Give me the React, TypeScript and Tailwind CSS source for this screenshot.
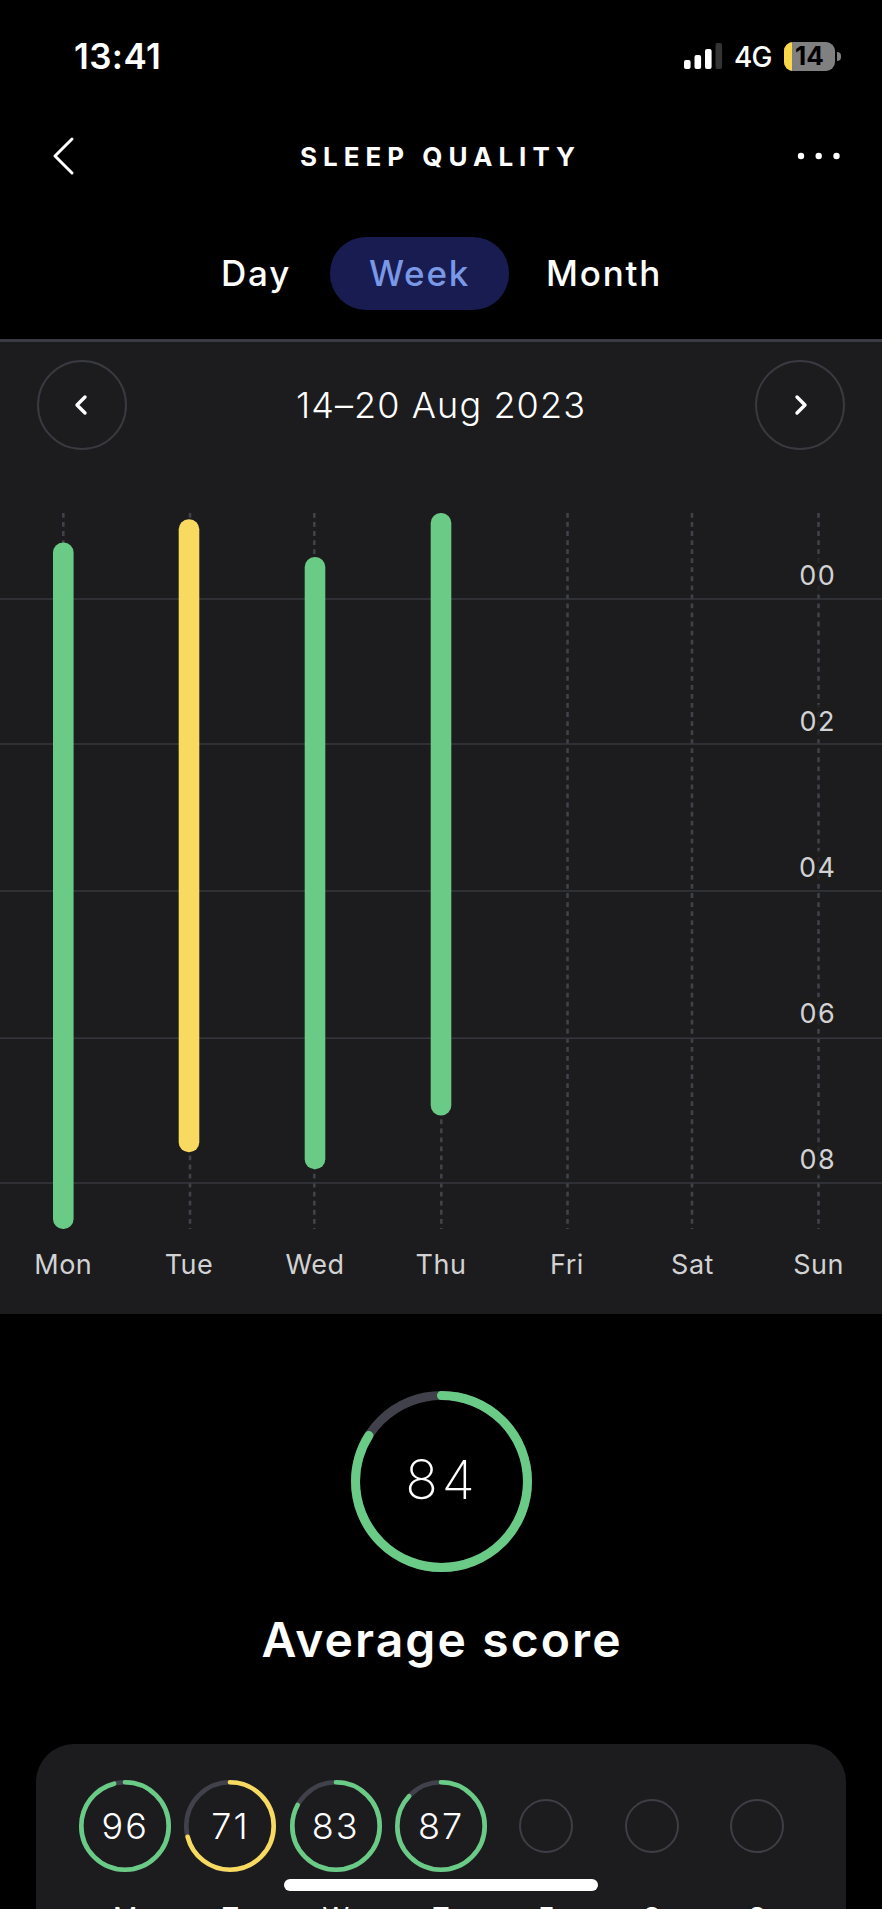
import React from 'react'

const GREEN = '#6acb87'
const YELLOW = '#f8da60'
const TRACK = '#40414a'

const days = [
  { label: 'Mon', x: 63.3, from: 542.5, to: 1229, color: GREEN },
  { label: 'Tue', x: 189, from: 519.3, to: 1152.3, color: YELLOW },
  { label: 'Wed', x: 315, from: 557, to: 1169.3, color: GREEN },
  { label: 'Thu', x: 441, from: 513, to: 1115.5, color: GREEN },
  { label: 'Fri', x: 567 },
  { label: 'Sat', x: 692.5 },
  { label: 'Sun', x: 818.5 }
]

const dashes = [63.3, 190, 314.3, 441.3, 567.5, 692, 818.5]

const hours = [
  { label: '00', y: 599, textY: 584.5 },
  { label: '02', y: 744, textY: 730.7 },
  { label: '04', y: 891, textY: 876.9 },
  { label: '06', y: 1038.3, textY: 1023 },
  { label: '08', y: 1183, textY: 1169.3 }
]

const scores = [
  { day: 'M', score: 96, color: GREEN },
  { day: 'T', score: 71, color: YELLOW },
  { day: 'W', score: 83, color: GREEN },
  { day: 'T', score: 87, color: GREEN },
  { day: 'F' },
  { day: 'S' },
  { day: 'S' }
]

interface RingProps {
  size: number
  stroke: number
  value: number
  color: string
}

const Ring: React.FC<RingProps> = ({ size, stroke, value, color }) => {
  const c = size / 2
  const r = c - stroke / 2
  return (
    <svg className="col-start-1 row-start-1 -rotate-90" width={size} height={size} fill="none" strokeWidth={stroke}>
      <circle cx={c} cy={c} r={r} stroke={TRACK} />
      <circle cx={c} cy={c} r={r} stroke={color} strokeLinecap="round" pathLength={100} strokeDasharray={`${value} 100`} />
    </svg>
  )
}

const StatusBar: React.FC = () => (
  <div className="flex h-[112px] items-center justify-between pl-[74px] pr-[41px]">
    <span className="text-[35px] font-semibold tracking-[0.4px]">13:41</span>
    <div className="flex items-center">
      <svg width="40" height="28" viewBox="0 0 40 28" fill="#fff">
        <rect x="0" y="18" width="6.6" height="9" rx="2" />
        <rect x="10.5" y="13" width="6.6" height="14" rx="2" />
        <rect x="21" y="7" width="6.6" height="20" rx="2" />
        <rect x="31.5" y="1" width="6.6" height="26" rx="2" fill="#333" />
      </svg>
      <span className="ml-[10px] mt-[2px] w-[50px] text-[28px] font-medium tracking-[-0.8px]">4G</span>
      <div className="flex h-[29px] w-[51px] items-center overflow-hidden rounded-[9px] bg-[#808080]">
        <div className="h-full w-2 bg-[#f8d749]" />
        <span className="ml-[3px] text-[26px] font-bold leading-none text-black">14</span>
      </div>
      <div className="ml-[2px] h-[9px] w-[4px] rounded-r-full bg-[#808080]" />
    </div>
  </div>
)

const Header: React.FC = () => (
  <div className="flex h-[88px] items-center justify-between pl-[52px] pr-[41px]">
    <svg width="24" height="40" viewBox="0 0 24 40" fill="none" stroke="#fff" strokeWidth="3" strokeLinecap="round" strokeLinejoin="round">
      <path d="M20 3 3 20 20 37" />
    </svg>
    <h1 className="ml-[8px] text-[26px] font-bold tracking-[6px]">SLEEP QUALITY</h1>
    <svg width="44" height="8" viewBox="0 0 44 8" fill="#fff">
      <circle cx="4" cy="4" r="3.2" />
      <circle cx="21.7" cy="4" r="3.2" />
      <circle cx="39.5" cy="4" r="3.2" />
    </svg>
  </div>
)

const Tabs: React.FC = () => (
  <div className="flex h-[139px] items-start pl-[221px] pt-[37px] text-[35px] font-medium tracking-[1.8px]">
    <button className="h-[73px] w-[109px] text-left">Day</button>
    <button className="h-[73px] w-[179px] rounded-[36px] bg-[#181c50] text-[#7a98e6]">Week</button>
    <button className="ml-[37px] h-[73px]">Month</button>
  </div>
)

const Chart: React.FC = () => (
  <svg className="block" width="882" height="819" viewBox="0 495 882 819">
    {dashes.map(x => (
      <line key={x} x1={x} x2={x} y1="513" y2="1229" stroke={TRACK} strokeWidth="2.6" strokeDasharray="4.8 4.25" />
    ))}
    {hours.map(h => (
      <g key={h.label}>
        <line x1="0" x2="882" y1={h.y} y2={h.y} stroke="#36373e" strokeWidth="1.6" />
        <rect x="800" y={h.textY - 26} width="36" height="32" fill="#1c1c1e" fillOpacity="0.75" />
        <text x="817.8" y={h.textY} textAnchor="middle" fontSize="27" letterSpacing="1.5" fill="#d2d2d4">{h.label}</text>
      </g>
    ))}
    {days.map(d => (
      <g key={d.label}>
        {d.from && <rect x={d.x - 10.3} y={d.from} width="20.6" height={d.to - d.from} rx="10" fill={d.color} />}
        <text x={d.x} y="1273.7" textAnchor="middle" fontSize="27" letterSpacing="0.5" fill="#d2d2d4">{d.label}</text>
      </g>
    ))}
  </svg>
)

const WeekPanel: React.FC = () => (
  <section className="h-[975px] border-t-[3px] border-[#3b3b45] bg-[#1c1c1e]">
    <div className="flex h-[153px] items-start justify-between px-[37px] pt-[18px]">
      <button className="grid size-[90px] place-items-center rounded-full border-2 border-[#393a41]">
        <svg className="mr-[3px]" width="16" height="24" viewBox="0 0 16 24" fill="none" stroke="#fff" strokeWidth="3.4" strokeLinecap="round" strokeLinejoin="round">
          <path d="M12 4 4 12l8 8" />
        </svg>
      </button>
      <h2 className="mt-[18px] text-[36px] leading-[54px] font-[350] tracking-[1.1px]">14–20 Aug 2023</h2>
      <button className="grid size-[90px] place-items-center rounded-full border-2 border-[#393a41]">
        <svg className="ml-[2px]" width="16" height="24" viewBox="0 0 16 24" fill="none" stroke="#fff" strokeWidth="3.4" strokeLinecap="round" strokeLinejoin="round">
          <path d="m4 4 8 8-8 8" />
        </svg>
      </button>
    </div>
    <Chart />
  </section>
)

export default function App() {
  return (
    <main className="relative h-[1909px] w-[882px] overflow-hidden bg-black font-['Inter','Liberation_Sans',sans-serif] text-white">
      <StatusBar />
      <Header />
      <Tabs />
      <WeekPanel />

      <section className="flex h-[430px] flex-col items-center pt-[77px]">
        <div className="grid place-items-center">
          <Ring size={181} stroke={9} value={84} color={GREEN} />
          <span className="col-start-1 row-start-1 pb-[4px] pl-[2px] text-[54px] leading-[76px] font-extralight tracking-[4px]">84</span>
        </div>
        <h2 className="mt-[32px] pl-[2px] text-[48px] leading-[72px] font-semibold tracking-[2.1px]">Average score</h2>
      </section>

      <section className="mx-[36px] h-[220px] rounded-t-[38px] bg-[#1c1c1e] px-[36.5px] pt-[36px]">
        <div className="grid grid-cols-7">
          {scores.map((s, i) => (
            <div key={i} className="flex flex-col items-center">
              <div className="grid h-[92px] place-items-center">
                {s.score ? (
                  <>
                    <Ring size={92} stroke={4.6} value={s.score} color={s.color} />
                    <span className="col-start-1 row-start-1 text-[36px] font-[350] tracking-[2px]">{s.score}</span>
                  </>
                ) : (
                  <div className="size-[54px] rounded-full border-2 border-[#3d3e46]" />
                )}
              </div>
              <span className="mt-[26px] text-[27px] leading-[40px]">{s.day}</span>
            </div>
          ))}
        </div>
      </section>

      {/* home indicator */}
      <div className="absolute left-[284px] top-[1879px] h-[12px] w-[314px] rounded-full bg-white" />
    </main>
  )
}
